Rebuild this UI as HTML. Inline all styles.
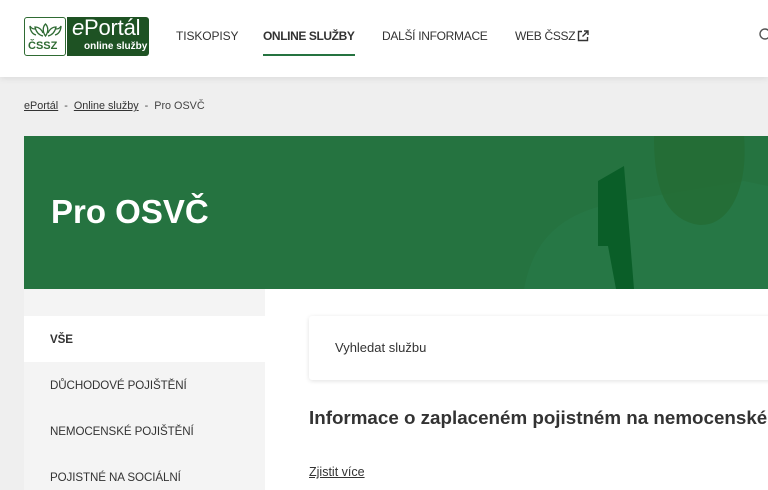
<!DOCTYPE html>
<html><head><meta charset="utf-8"><style>
*{margin:0;padding:0;box-sizing:border-box}
body{width:768px;height:490px;overflow:hidden;background:#efefef;font-family:"Liberation Sans",sans-serif;color:#333;position:relative}
.hdr{position:absolute;left:0;top:0;width:768px;height:77px;background:#fff;box-shadow:0 2px 6px rgba(0,0,0,.08)}
.nav{position:absolute;top:29px;font-size:12px;color:#333;letter-spacing:-.1px}
.abs{position:absolute}
.bc{position:absolute;top:100px;left:24px;font-size:10.8px;color:#444}
.bc u{color:#333}
.banner{position:absolute;left:24px;top:136px;width:744px;height:153px;background:#257340;overflow:hidden}
.side{position:absolute;left:24px;top:289px;width:241px;height:201px;background:#f4f4f4}
.main{position:absolute;left:265px;top:289px;width:503px;height:201px;background:#fff}
.si{position:absolute;left:26px;font-size:11.6px;color:#333;letter-spacing:-.1px}
</style></head><body>
<div class="hdr">
 <div class="abs" style="left:24px;top:17px;width:42px;height:39px;border:1.5px solid #2f6b33;border-radius:3px;background:#fff">
  <svg width="39" height="22" viewBox="0 0 39 22" style="position:absolute;left:1px;top:2px"><g fill="none" stroke="#2f6b33" stroke-width="1.3"><path d="M19.5 4c-3 3-3 8 0 12 3-4 3-9 0-12z"/><path d="M17 16c-4-1-7-4-8-9 4 0 7 3 8 6"/><path d="M22 16c4-1 7-4 8-9-4 0-7 3-8 6"/><path d="M9 9c-2 0-4-1-5-3 0 4 2 8 6 9"/><path d="M30 9c2 0 4-1 5-3 0 4-2 8-6 9"/></g></svg>
  <div class="abs" style="left:3px;top:22px;font-size:11px;font-weight:bold;color:#2f6b33">ČSSZ</div>
 </div>
 <div class="abs" style="left:67px;top:17px;width:82px;height:39px;background:#1e5223;border-radius:0 3px 3px 0;color:#fff">
  <div class="abs" style="left:5px;top:-2px;font-size:22px;letter-spacing:-.2px"><i>e</i>Portál</div>
  <div class="abs" style="left:17px;top:24px;font-size:10px;font-weight:bold">online služby</div>
 </div>
 <div class="nav" style="left:176px">TISKOPISY</div>
 <div class="nav" style="left:263px;font-weight:bold;letter-spacing:-.4px">ONLINE SLUŽBY</div>
 <div class="abs" style="left:263px;top:54px;width:92px;height:2px;background:#257340"></div>
 <div class="nav" style="left:382px;letter-spacing:-.3px">DALŠÍ INFORMACE</div>
 <div class="nav" style="left:515px;letter-spacing:-.3px">WEB ČSSZ</div>
 <svg class="abs" style="left:577px;top:30px" width="12" height="12" viewBox="0 0 12 12"><path d="M5 1.5H1.5v9h9V7M7 1h4v4M11 1L5.5 6.5" fill="none" stroke="#333" stroke-width="1.4"/></svg>
 <svg class="abs" style="left:758px;top:27px" width="14" height="14"><circle cx="7" cy="7" r="5" fill="none" stroke="#555" stroke-width="1.4"/></svg>
</div>
<div class="bc"><u>ePortál</u>&nbsp; - &nbsp;<u>Online služby</u>&nbsp; - &nbsp;Pro OSVČ</div>
<div class="banner">
 <svg width="744" height="153" style="position:absolute;left:0;top:0"><path d="M500 153 C510 100 540 75 600 65 L720 45 L744 50 L744 153Z" fill="#28794a" opacity=".6"/><path d="M630 0 L720 0 C725 60 700 95 670 88 C640 80 630 50 630 0Z" fill="#246c33" opacity=".8"/><path d="M574 45 L600 30 L610 153 L592 153 L584 110 L574 110Z" fill="#0a5e28"/></svg>
 <div class="abs" style="left:27px;top:57px;font-size:33px;font-weight:bold;color:#fff">Pro OSVČ</div>
</div>
<div class="side">
 <div class="abs" style="left:0;top:27px;width:241px;height:46px;background:#fff"></div>
 <div class="si" style="top:44px;font-weight:bold">VŠE</div>
 <div class="si" style="top:90px">DŮCHODOVÉ POJIŠTĚNÍ</div>
 <div class="si" style="top:136px">NEMOCENSKÉ POJIŠTĚNÍ</div>
 <div class="si" style="top:182px">POJISTNÉ NA SOCIÁLNÍ</div>
</div>
<div class="main">
 <div class="abs" style="left:44px;top:27px;width:470px;height:64px;background:#fff;border-radius:3px;box-shadow:0 1px 5px rgba(0,0,0,.12)"></div>
 <div class="abs" style="left:70px;top:51px;font-size:13px;color:#333">Vyhledat službu</div>
 <div class="abs" style="left:44px;top:118px;font-size:18.8px;font-weight:bold;color:#333;white-space:nowrap">Informace o zaplaceném pojistném na nemocenské</div>
 <div class="abs" style="left:44px;top:176px;font-size:12.5px;color:#333;text-decoration:underline">Zjistit více</div>
</div>
</body></html>
